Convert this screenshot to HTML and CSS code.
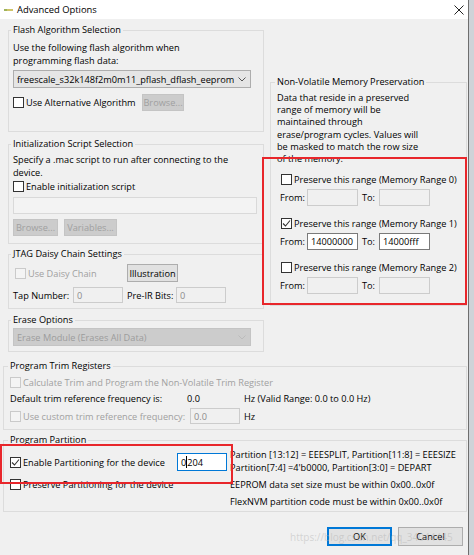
FILE: index.html
```html
<!DOCTYPE html>
<html lang="en">
<head>
  <meta charset="UTF-8" />
  <title>Advanced Options</title>
  <link rel="stylesheet" href="styles.css">
</head>
<body>

<div class="window">

  <div class="titlebar">
    <svg class="app-icon" width="9" height="4" viewBox="0 0 9 4"><rect x="0" y="1" width="9" height="2" fill="#cfc46a"/><rect x="0" y="1" width="3" height="2" fill="#9fb35a"/></svg>
    <span class="title">Advanced Options</span>
    <svg class="close" width="10" height="10" viewBox="0 0 10 10"><path d="M0.5 0.5 L9.5 9.5 M9.5 0.5 L0.5 9.5" stroke="#222" stroke-width="1" fill="none"/></svg>
  </div>

  <div class="content">

    <div class="top">
      <div class="col-left">

        <!-- Flash algorithm -->
        <fieldset class="group g-flash">
          <legend>Flash Algorithm Selection</legend>
          <p class="desc d-flash">Use the following flash algorithm when<br>programming flash data:</p>
          <div class="combo">
            <span class="combo-text">freescale_s32k148f2m0m11_pflash_dflash_eeprom.axf</span>
            <svg class="chevron" width="8" height="5" viewBox="0 0 8 5"><path d="M0.5 0.5 L4 4 L7.5 0.5" stroke="#555" fill="none"/></svg>
          </div>
          <div class="row r-alt">
            <label class="check c-alt"><span class="box"></span>Use Alternative Algorithm</label>
            <button class="btn btn-browse1" disabled>Browse...</button>
          </div>
        </fieldset>

        <!-- Init script -->
        <fieldset class="group g-init">
          <legend>Initialization Script Selection</legend>
          <p class="desc d-init">Specify a .mac script to run after connecting to the<br>device.</p>
          <label class="check"><span class="box"></span>Enable initialization script</label>
          <div class="field f-script"></div>
          <div class="row r-script">
            <button class="btn btn-browse2" disabled>Browse...</button>
            <button class="btn btn-vars" disabled>Variables...</button>
          </div>
        </fieldset>

        <!-- JTAG -->
        <fieldset class="group g-jtag">
          <legend>JTAG Daisy Chain Settings</legend>
          <div class="row r-daisy">
            <label class="check disabled c-daisy"><span class="box"></span>Use Daisy Chain</label>
            <button class="btn btn-illu">Illustration</button>
          </div>
          <div class="row r-tap">
            <span class="lbl l-tap">Tap Number:</span>
            <span class="field off f-small">0</span>
            <span class="lbl l-ir">Pre-IR Bits:</span>
            <span class="field off f-small">0</span>
          </div>
        </fieldset>

        <!-- Erase -->
        <fieldset class="group g-erase">
          <legend>Erase Options</legend>
          <div class="combo off">
            <span class="combo-text">Erase Module (Erases All Data)</span>
            <svg class="chevron" width="8" height="5" viewBox="0 0 8 5"><path d="M0.5 0.5 L4 4 L7.5 0.5" stroke="#bbb" fill="none"/></svg>
          </div>
        </fieldset>

      </div>

      <div class="col-right">
        <fieldset class="group g-nvm">
          <legend>Non-Volatile Memory Preservation</legend>
          <p class="desc d-nvm">Data that reside in a preserved<br>range of memory will be<br>maintained through<br>erase/program cycles. Values will<br>be masked to match the row size<br>of the memory.</p>

          <div class="range">
            <label class="check c-range"><span class="box"></span>Preserve this range (Memory Range 0)</label>
            <div class="row r-from">
              <span class="lbl l-from">From:</span><span class="field off f-addr"></span>
              <span class="lbl l-to">To:</span><span class="field off f-addr"></span>
            </div>
          </div>

          <div class="range">
            <label class="check c-range"><span class="box on"><svg width="9" height="9" viewBox="0 0 9 9"><path d="M1 4.5 L3.5 7 L8 1.5" stroke="#333" stroke-width="1.1" fill="none"/></svg></span>Preserve this range (Memory Range 1)</label>
            <div class="row r-from">
              <span class="lbl l-from">From:</span><span class="field f-addr">14000000</span>
              <span class="lbl l-to">To:</span><span class="field f-addr">14000fff</span>
            </div>
          </div>

          <div class="range">
            <label class="check c-range"><span class="box"></span>Preserve this range (Memory Range 2)</label>
            <div class="row r-from">
              <span class="lbl l-from">From:</span><span class="field off f-addr"></span>
              <span class="lbl l-to">To:</span><span class="field off f-addr"></span>
            </div>
          </div>
        </fieldset>
      </div>
    </div>

    <!-- Trim registers -->
    <fieldset class="group g-trim">
      <legend>Program Trim Registers</legend>
      <label class="check disabled c-calc"><span class="box"></span>Calculate Trim and Program the Non-Volatile Trim Register</label>
      <div class="trim-grid">
        <span>Default trim reference frequency is:</span>
        <span>0.0</span>
        <span>Hz (Valid Range: 0.0 to 0.0 Hz)</span>
        <label class="check disabled"><span class="box"></span>Use custom trim reference frequency:</label>
        <span class="field off f-hz">0.0</span>
        <span>Hz</span>
      </div>
    </fieldset>

    <!-- Partition -->
    <fieldset class="group g-part">
      <legend>Program Partition</legend>
      <div class="part-grid">
        <div class="part-left">
          <div class="row r-enable">
            <label class="check c-enable"><span class="box on"><svg width="9" height="9" viewBox="0 0 9 9"><path d="M1 4.5 L3.5 7 L8 1.5" stroke="#333" stroke-width="1.1" fill="none"/></svg></span>Enable Partitioning for the device</label>
            <span class="field focus f-part">0<span class="caret"></span>204</span>
          </div>
          <label class="check c-keep"><span class="box"></span>Preserve Partitioning for the device</label>
        </div>
        <div class="part-right">
          <p class="note n-two">Partition [13:12] = EEESPLIT, Partition[11:8] = EEESIZE<br>Partition[7:4] =4'b0000, Partition[3:0] = DEPART</p>
          <p class="note">EEPROM data set size must be within 0x00..0x0f</p>
          <p class="note n-last">FlexNVM partition code must be within 0x00..0x0f</p>
        </div>
      </div>
    </fieldset>

    <div class="buttons">
      <button class="btn btn-dlg btn-ok">OK</button>
      <button class="btn btn-dlg">Cancel</button>
    </div>

  </div>

  <!-- annotations drawn over the dialog -->
  <div class="mark mark-nvm"></div>
  <div class="mark mark-part"></div>
  <div class="watermark">https://blog.csdn.net/qq_34044445</div>
</div>

</body>
</html>
```

FILE: styles.css
```css
:root {
  --face: #f0f0f0;
  --line: #dcdcdc;
  --grey-text: #a0a0a0;
  --blue: #0078d7;
  --red: #e8262b;
}

* {
  box-sizing: border-box;
}

body {
  margin: 0;
  background: #cfd3d8;
  font-family: 'Open Sans', 'Noto Sans', sans-serif;
  font-size: 9.2px;
  color: #000;
}

.window {
  position: relative;
  width: 469px;
  height: 555px;
  background: var(--face);
  border-right: 1px solid #6e6e6e;
}

/* title bar */
.titlebar {
  height: 19px;
  background: #ffffff;
  display: flex;
  align-items: center;
  padding: 0 0 0 4px;
}

.app-icon {
  margin-right: 4px;
}

.title {
  font-size: 9.4px;
  flex: 1;
}

.close {
  margin-right: 4px;
}

.content {
  padding: 4px 1px 0 3px;
}

.top {
  display: flex;
  padding-left: 5px;
  gap: 6px;
  height: 336px;
}

.col-left {
  width: 256px;
}

.col-right {
  width: 197px;
}

/* group boxes */
.group {
  margin: 0;
  padding: 0 4px;
  border: 1px solid var(--line);
  min-width: 0;
}

.group legend {
  padding: 0 2px;
  margin-left: -2px;
  line-height: 14px;
}

.g-flash { height: 109px; }
.g-init  { height: 107px; margin-top: 5px; }
.g-jtag  { height: 62px; margin-top: 3px; }
.g-erase { height: 39px; margin-top: 4px; }
.g-nvm   { height: 231px; margin-top: 52px; padding-left: 6px; }
.g-trim  { height: 71px; margin-top: 0; padding-left: 6px; }
.g-part  { height: 79px; margin-top: 3px; padding-left: 6px; }

.desc {
  margin: 0;
  line-height: 13px;
}

.d-flash { margin-top: 4px; }
.d-init  { margin-top: 2px; }
.d-nvm   { margin-top: 3px; line-height: 12.2px; height: 74px; }

.row {
  display: flex;
  align-items: center;
}

/* checkboxes */
.check {
  display: flex;
  align-items: center;
  height: 15px;
  white-space: nowrap;
}

.box {
  width: 11px;
  height: 11px;
  border: 1px solid #333;
  background: #fff;
  margin-right: 2px;
  display: flex;
  align-items: center;
  justify-content: center;
  flex: none;
}

.check.disabled {
  color: var(--grey-text);
}

.check.disabled .box {
  border-color: #cacaca;
  background: #f4f4f4;
}

/* combos, fields, buttons */
.combo {
  height: 18px;
  margin-top: 3px;
  width: 238px;
  border: 1px solid #adadad;
  background: #e5e5e5;
  display: flex;
  align-items: center;
  padding: 0 4px 0 3px;
}

.combo-text {
  flex: 1;
  overflow: hidden;
  white-space: nowrap;
}

.chevron {
  margin-left: 4px;
}

.combo.off {
  background: #cccccc;
  border-color: #c4c4c4;
  color: #9c9c9c;
  margin-top: 1px;
}

.field {
  display: flex;
  align-items: center;
  height: 17px;
  border: 1px solid #7a7a7a;
  background: #ffffff;
  padding: 0 3px;
  white-space: nowrap;
}

.field.off {
  border-color: #cccccc;
  background: #f0f0f0;
  color: #8d8d8d;
}

.field.focus {
  border-color: var(--blue);
}

.caret {
  display: inline-block;
  width: 1px;
  height: 12px;
  background: #000;
}

.btn {
  font: inherit;
  height: 17px;
  padding: 0;
  border: 1px solid #adadad;
  background: #e1e1e1;
  color: #000;
}

.btn:disabled {
  background: #cccccc;
  border-color: #c4c4c4;
  color: var(--grey-text);
}

/* flash group */
.r-alt { margin-top: 6px; }
.c-alt { width: 129px; }
.btn-browse1 { width: 42px; }

/* init group */
.f-script {
  margin-top: 3px;
  width: 244px;
  border-color: #d9d9d9;
  background: #f3f3f3;
}

.r-script { margin-top: 5px; gap: 6px; }
.btn-browse2 { width: 45px; }
.btn-vars { width: 53px; }

/* jtag group */
.r-daisy { margin-top: 3px; height: 18px; }
.c-daisy { width: 112px; margin-left: 2px; color: var(--grey-text); }
.btn-illu { width: 51px; height: 18px; }
.r-tap { margin-top: 5px; }
.l-tap { width: 60px; }
.l-ir { width: 49px; margin-left: 4px; }
.f-small { width: 50px; height: 16px; }

/* memory ranges */
.range { margin-top: 10px; }
.range:first-of-type { margin-top: 6px; }
.c-range { margin-left: 4px; }
.r-from { margin-top: 2px; margin-left: 3px; }
.l-from { width: 27px; }
.l-to { width: 17px; margin-left: 4px; }
.f-addr { width: 51px; }

/* trim group */
.c-calc { margin-top: 2px; }

.trim-grid {
  display: grid;
  grid-template-columns: 177px 57px auto;
  grid-template-rows: 14px 16px;
  row-gap: 3px;
  align-items: center;
  margin-top: 1px;
}

.f-hz { width: 50px; height: 16px; margin-left: 3px; }

/* partition group */
.part-grid {
  display: grid;
  grid-template-columns: 220px auto;
}

.r-enable { margin-top: 6px; }
.c-enable { width: 167px; }
.f-part { width: 50px; height: 18px; }
.c-keep { margin-top: 6px; }

.note {
  margin: 0;
  line-height: 14px;
  white-space: nowrap;
}

.part-right { margin-top: 2px; }
.n-two { line-height: 12.5px; margin-bottom: 4px; }
.n-last { margin-top: 3px; }

/* dialog buttons */
.buttons {
  display: flex;
  justify-content: flex-end;
  gap: 6px;
  margin-top: 15px;
  padding-right: 4px;
}

.btn-dlg {
  width: 65px;
  height: 19px;
}

.btn-ok {
  border-color: var(--blue);
  box-shadow: inset 0 0 0 1px var(--blue);
}

/* red annotation frames */
.mark {
  position: absolute;
  border: 2px solid var(--red);
}

.mark-nvm {
  left: 262px;
  top: 157px;
  width: 205px;
  height: 148px;
}

.mark-part {
  left: 0;
  top: 444px;
  width: 233px;
  height: 40px;
}

.watermark {
  position: absolute;
  left: 290px;
  top: 530px;
  font-size: 10px;
  color: rgba(175, 175, 175, 0.45);
  pointer-events: none;
}
```
